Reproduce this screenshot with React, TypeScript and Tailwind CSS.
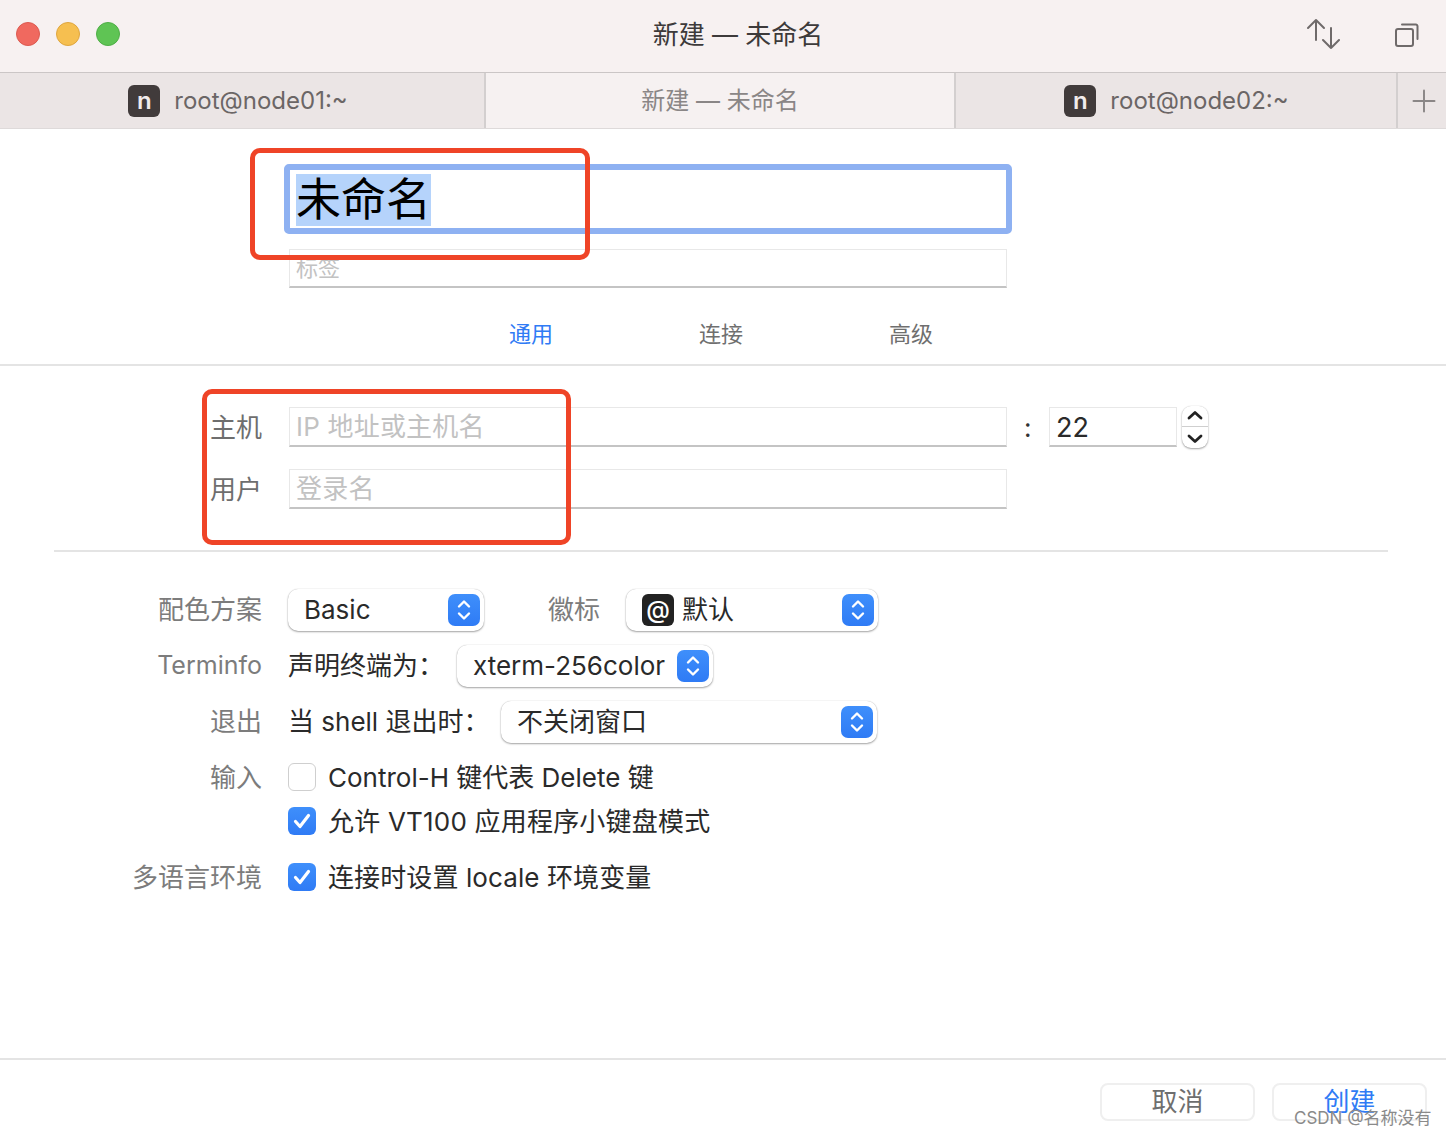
import type { ReactNode } from "react";
import { Plus } from "lucide-react";

const Stepper = () => (
  <div className="flex h-8 w-8 shrink-0 items-center justify-center rounded-[7px] bg-gradient-to-b from-[#3f8ffb] to-[#2f7bf5]">
    <svg width="20" height="26" viewBox="0 0 20 26" fill="none" stroke="#fff" strokeWidth="2.4" strokeLinecap="round" strokeLinejoin="round">
      <path d="M5 9.5 10 4.5 15 9.5" />
      <path d="M5 16.5 10 21.5 15 16.5" />
    </svg>
  </div>
);

const Select = ({ width, children }: { width: string; children: ReactNode }) => (
  <div className={`flex h-[42px] shrink-0 items-center justify-between rounded-[10px] bg-white pl-[16px] pr-[4px] text-[26px] text-[#2a2a2a] whitespace-nowrap shadow-[0_1px_2px_rgba(0,0,0,0.35),0_0_1px_rgba(0,0,0,0.25)] [&>span]:-mt-[2px] ${width}`}>
    {children}
  </div>
);

const Check = ({ checked }: { checked?: boolean }) =>
  checked ? (
    <div className="flex h-[28px] w-[28px] shrink-0 items-center justify-center rounded-[6px] bg-gradient-to-b from-[#3f8ffb] to-[#2f7bf5]">
      <svg width="20" height="20" viewBox="0 0 20 20" fill="none" stroke="#fff" strokeWidth="3.2" strokeLinecap="round" strokeLinejoin="round">
        <path d="M3.5 10.5 8 15.5 16.5 4.5" />
      </svg>
    </div>
  ) : (
    <div className="h-[28px] w-[28px] shrink-0 rounded-[6px] border border-[#cfcfcf] bg-white" />
  );

const Tab = ({ label, icon, className = "" }: { label: string; icon?: boolean; className?: string }) => (
  <div className={`flex items-center justify-center gap-[14px] ${className}`}>
    {icon && (
      <div className="flex h-8 w-8 items-center justify-center rounded-[6px] bg-[#413b3b] text-[24px] font-semibold text-[#f1ecec]">n</div>
    )}
    <span className="pt-[1px] text-[24px] whitespace-nowrap text-[#6b6666]">{label}</span>
  </div>
);

const FieldLabel = ({ children, className = "" }: { children: ReactNode; className?: string }) => (
  <div className={`w-[262px] shrink-0 text-right text-[26px] text-[#7c7c7c] ${className}`}>{children}</div>
);

const TextField = ({ placeholder }: { placeholder: string }) => (
  <div className="ml-[1px] flex h-[40px] w-[718px] items-center border border-[#e8e8e8] border-b-2 border-b-[#c4c4c4] pl-[6px] text-[26px] tracking-[0.2px] text-[#c2c2c2]">{placeholder}</div>
);

export default function App() {
  return (
    <div className="relative h-[1136px] w-[1446px] overflow-hidden bg-white" style={{ fontFamily: 'Inter, "Noto Sans CJK SC", sans-serif' }}>
      {/* title bar */}
      <div className="relative flex h-[72px] items-center justify-center bg-[#f7f1f1] text-[26px] text-[#3d3a3a]">
        <div className="absolute left-[16px] top-[22px] flex gap-[16px]">
          <div className="h-6 w-6 rounded-full border border-[#dc5a50] bg-[#f0695f]" />
          <div className="h-6 w-6 rounded-full border border-[#dfa63f] bg-[#f6bf50]" />
          <div className="h-6 w-6 rounded-full border border-[#4fae46] bg-[#5fc454]" />
        </div>
        <span className="-mt-1 ml-[30px]">新建 — 未命名</span>
        <div className="absolute right-[26px] top-[18px] flex items-start gap-[54px]">
          <svg width="34" height="32" viewBox="0 0 34 32" fill="none" stroke="#6f6a6a" strokeWidth="2" strokeLinecap="round" strokeLinejoin="round">
            <path d="M10 2v20M2 10l8-8 8 8" />
            <path d="M25 10v20M17 22l8 8 8-8" />
          </svg>
          <svg width="26" height="26" viewBox="0 0 26 26" fill="none" stroke="#6f6a6a" strokeWidth="2" strokeLinecap="round" strokeLinejoin="round" className="mt-[4px]">
            <rect x="2" y="7" width="17" height="17" rx="2" />
            <path d="M8 2.5h14a2 2 0 0 1 1.5 1.5v13" />
          </svg>
        </div>
      </div>
      {/* tabs */}
      <div className="flex h-[57px] border-y border-t-[#cbc6c6] border-b-[#dedada] bg-[#ebe5e5]">
        <Tab label="root@node01:~" icon className="w-[486px] border-r-2 border-[#d3cfcf] pr-[8px]" />
        <Tab label="新建 — 未命名" className="w-[468px] bg-[#f6f1f1] [&>span]:text-[#8a8686]" />
        <Tab label="root@node02:~" icon className="w-[444px] border-x-2 border-[#d3cfcf] pl-[1px]" />
        <div className="flex flex-1 items-center justify-center pl-[3px]">
          <Plus size={36} strokeWidth={1.3} className="text-[#8a8686]" />
        </div>
      </div>
      {/* name + tag */}
      <div className="pl-[284px] pt-[35px]">
        <div className="flex h-[70px] w-[728px] items-center rounded-[5px] border-[6px] border-[#8eb1f2] pl-[6px] pt-[2px]">
          <span className="bg-[#b5d3fb] text-[45px] leading-[52px] text-black">未命名</span>
        </div>
        <div className="ml-[5px] mt-[15px] flex h-[39px] w-[718px] items-center border border-[#e8e8e8] border-b-2 border-b-[#c4c4c4] pl-[6px] text-[22px] text-[#c2c2c2]">标签</div>
      </div>
      <div className="mt-[30px] flex h-[48px] items-start border-b-2 border-[#e4e4e4] pl-[509px] text-[22px] text-[#6f6f6f]">
        <span className="text-[#2f7bf5]">通用</span>
        <span className="ml-[146px]">连接</span>
        <span className="ml-[146px]">高级</span>
      </div>
      {/* host + user */}
      <div className="mt-[40px] flex flex-col gap-[21px]">
        <div className="flex items-center gap-[26px]">
          <FieldLabel>
            <span className="text-[#6e6e6e]">主机</span>
          </FieldLabel>
          <TextField placeholder="IP 地址或主机名" />
          <span className="ml-[-9px] w-[16px] text-[26px] text-[#333]">:</span>
          <div className="-ml-[17px] flex h-[40px] w-[128px] items-center border border-[#e8e8e8] border-b-2 border-b-[#c4c4c4] pl-[6px] pt-[3px] text-[27px] text-[#2a2a2a]">22</div>
          <div className="-ml-[21px] flex h-[42px] w-[26px] flex-col items-center justify-around rounded-[9px] bg-white shadow-[0_1px_2px_rgba(0,0,0,0.35),0_0_1px_rgba(0,0,0,0.2)]">
            <svg width="18" height="12" viewBox="0 0 18 12" fill="none" stroke="#222" strokeWidth="2.8" strokeLinecap="round" strokeLinejoin="round"><path d="M3 9 9 3.5 15 9" /></svg>
            <div className="h-px w-full bg-[#cfcfcf]" />
            <svg width="18" height="12" viewBox="0 0 18 12" fill="none" stroke="#222" strokeWidth="2.8" strokeLinecap="round" strokeLinejoin="round"><path d="M3 3 9 8.5 15 3" /></svg>
          </div>
        </div>
        <div className="flex items-center gap-[26px]">
          <FieldLabel>
            <span className="text-[#6e6e6e]">用户</span>
          </FieldLabel>
          <TextField placeholder="登录名" />
        </div>
      </div>
      <div className="ml-[54px] mt-[41px] h-[2px] w-[1334px] bg-[#e4e4e4]" />
      {/* options */}
      <div className="mt-[37px] flex flex-col gap-[14px]">
        <div className="flex items-center gap-[26px]">
          <FieldLabel className="-mt-[2px]">配色方案</FieldLabel>
          <Select width="w-[196px]">
            <span>Basic</span>
            <Stepper />
          </Select>
          <span className="-mt-[2px] ml-[38px] text-[26px] text-[#7c7c7c]">徽标</span>
          <Select width="w-[252px]">
            <div className="flex items-center gap-[8px]">
              <div className="flex h-8 w-8 items-center justify-center rounded-[6px] bg-[#222] text-[24px] font-medium leading-none text-white">@</div>
              <span className="-mt-[2px]">默认</span>
            </div>
            <Stepper />
          </Select>
        </div>
        <div className="flex items-center gap-[26px]">
          <FieldLabel className="-mt-[2px]">
            <span className="text-[25px]">Terminfo</span>
          </FieldLabel>
          <span className="-mt-[2px] w-[143px] shrink-0 whitespace-nowrap text-[26px] text-[#2a2a2a]">声明终端为：</span>
          <Select width="w-[256px]">
            <span>xterm-256color</span>
            <Stepper />
          </Select>
        </div>
        <div className="flex items-center gap-[26px]">
          <FieldLabel className="-mt-[2px]">退出</FieldLabel>
          <span className="-mt-[2px] w-[187px] shrink-0 whitespace-nowrap text-[26px] text-[#2a2a2a]">当 shell 退出时：</span>
          <Select width="w-[376px]">
            <span>不关闭窗口</span>
            <Stepper />
          </Select>
        </div>
      </div>
      <div className="mt-[12px] flex flex-col text-[26px] text-[#2a2a2a]">
        <div className="flex h-[44px] items-center gap-[26px]">
          <FieldLabel>输入</FieldLabel>
          <Check />
          <span className="-ml-[14px]">Control-H 键代表 Delete 键</span>
        </div>
        <div className="flex h-[44px] items-center gap-[26px]">
          <div className="w-[262px] shrink-0" />
          <Check checked />
          <span className="-ml-[14px] tracking-[0.2px]">允许 VT100 应用程序小键盘模式</span>
        </div>
        <div className="mt-[12px] flex h-[44px] items-center gap-[26px]">
          <FieldLabel>多语言环境</FieldLabel>
          <Check checked />
          <span className="-ml-[14px] tracking-[0.1px]">连接时设置 locale 环境变量</span>
        </div>
      </div>
      {/* footer */}
      <div className="mt-[159px] flex justify-end gap-[17px] border-t-2 border-[#e4e4e4] pr-[19px] pt-[23px] text-[26px]">
        <div className="flex h-[38px] w-[155px] items-center justify-center rounded-[8px] border-2 border-[#efefef] pb-[2px] text-[#6e6e6e]">取消</div>
        <div className="flex h-[38px] w-[155px] items-center justify-center rounded-[8px] border-2 border-[#efefef] pb-[2px] text-[#2f7bf5]">创建</div>
      </div>
      {/* annotations */}
      <div className="absolute left-[250px] top-[148px] h-[112px] w-[340px] rounded-[10px] border-[5px] border-[#ef4427]" />
      <div className="absolute left-[202px] top-[389px] h-[156px] w-[369px] rounded-[10px] border-[5px] border-[#ef4427]" />
      <div className="absolute left-[1294px] top-[1107px] text-[17px] leading-[22px] text-[#8a8a8a]">CSDN @名称没有</div>
    </div>
  );
}
